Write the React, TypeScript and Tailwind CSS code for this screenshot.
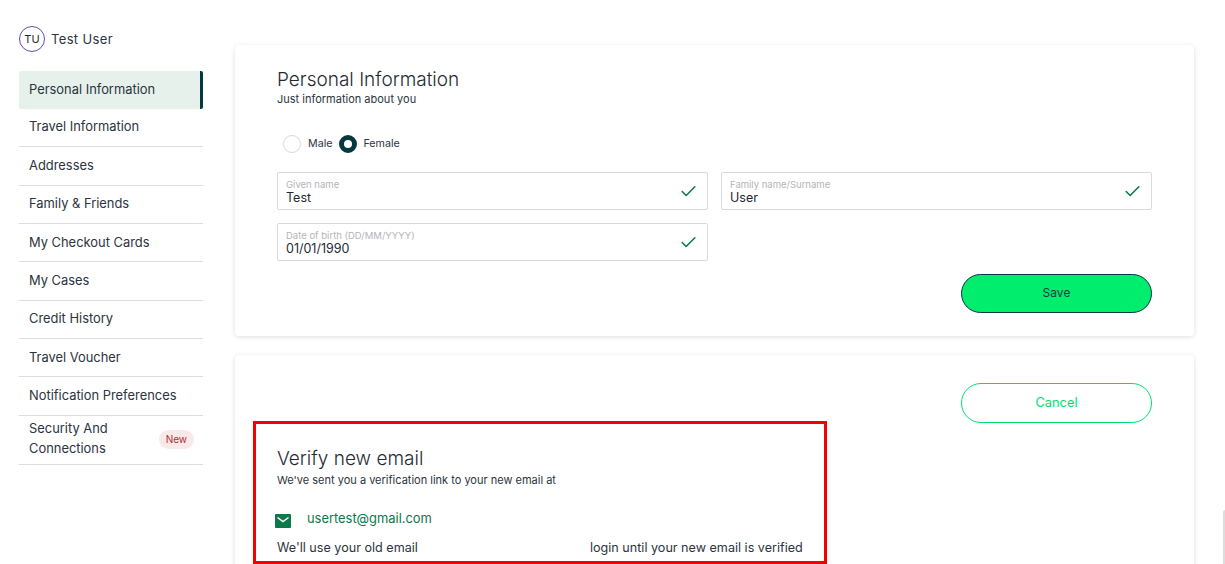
import { Check } from "lucide-react";

const navItems = [
  "Travel Information",
  "Addresses",
  "Family & Friends",
  "My Checkout Cards",
  "My Cases",
  "Credit History",
  "Travel Voucher",
  "Notification Preferences",
];

const Field = ({ label, value }: { label: string; value: string }) => (
  <div className="flex h-[38px] items-center justify-between rounded-[2px] border border-[#d8d8e0] pl-2 pr-[9px]">
    <div className="flex flex-col pt-[2px]">
      <span className="text-[9.5px] leading-[10px] text-[#b4b4b8]">{label}</span>
      <span className="text-[12.5px] leading-[15px] text-[#1f2a33]">{value}</span>
    </div>
    <Check className="h-[19px] w-[19px] text-[#0b7a4b]" strokeWidth={2} />
  </div>
);

export default function App() {
  return (
    <div
      className="relative flex h-[564px] w-[1225px] items-start overflow-hidden bg-white text-[#2c3440]"
      style={{ fontFamily: "Inter, sans-serif" }}
    >
      <aside className="ml-[19px] mt-[26px] w-[184px] shrink-0">
        <div className="flex items-center gap-[6px]">
          <div className="flex h-[26px] w-[26px] items-center justify-center rounded-full border border-[#5b4fb5] text-[11px] text-[#1f2a33]">
            TU
          </div>
          <span className="pt-[2px] text-[13px] tracking-[0.35px]">Test User</span>
        </div>

        <div className="mt-[19px] flex h-[38px] items-center rounded-[2px] border-r-[3px] border-[#06393f] bg-[#e6f1ec] pb-[1px] pl-[10px] text-[12.9px]">
          Personal Information
        </div>
        {navItems.map((item) => (
          <div
            key={item}
            className="flex h-[38.35px] items-center border-b border-[#dcdce4] pb-[1px] pl-[10px] text-[12.9px]"
          >
            {item}
          </div>
        ))}
        <div className="flex h-[49px] items-center justify-between border-b border-[#dcdce4] pb-[1px] pl-[10px] pr-[9px] text-[12.9px] leading-[20px]">
          <span>
            Security And
            <br />
            Connections
          </span>
          <span className="rounded-full bg-[#fbe9e9] px-[7px] py-[2px] text-[10px] leading-[15px] text-[#a8323a]">
            New
          </span>
        </div>
      </aside>

      <main className="ml-[32px] mt-[45px] w-[959px] shrink-0">
        <section className="h-[291px] rounded-[4px] bg-white pl-[42px] pr-[42px] pt-[23px] shadow-[0_1px_5px_rgba(0,0,0,0.13)]">
          <h2 className="text-[19px] font-light leading-[24px] text-[#1f2a33]">Personal Information</h2>
          <p className="mt-[1px] text-[11px] leading-[13px] text-[#2c3440]">Just information about you</p>

          <div className="ml-[6px] mt-[29px] flex items-center text-[10.7px]">
            <span className="h-[18px] w-[18px] rounded-full border border-[#d8d8e0]" />
            <span className="ml-[7px]">Male</span>
            <span className="ml-[7px] h-[18px] w-[18px] rounded-full border-[5px] border-[#06393f] bg-white" />
            <span className="ml-[6px]">Female</span>
          </div>

          <div className="mt-[19px] grid grid-cols-2 gap-x-[13px] gap-y-[13px]">
            <Field label="Given name" value="Test" />
            <Field label="Family name/Surname" value="User" />
            <Field label="Date of birth (DD/MM/YYYY)" value="01/01/1990" />
          </div>

          <div className="mt-[13px] flex justify-end">
            <button className="h-[39px] w-[191px] rounded-full border border-[#06393f] bg-[#00ed6e] pb-[1px] text-[12px] text-[#1f3a3f]">
              Save
            </button>
          </div>
        </section>

        <section className="mt-[19px] h-[300px] rounded-[4px] bg-white pt-[28px] shadow-[0_1px_5px_rgba(0,0,0,0.13)]">
          <div className="flex justify-end pr-[42px]">
            <button className="h-[40px] w-[191px] rounded-full border border-[#00e070] bg-white text-[12.8px] text-[#00e070]">
              Cancel
            </button>
          </div>

          <div className="ml-[18px] mt-[-2px] h-[143px] w-[574px] border-[3px] border-[#f40000] pl-[21px] pt-[23px]">
            <h2 className="text-[19px] font-light leading-[24px] text-[#1f2a33]">Verify new email</h2>
            <p className="mt-[3px] text-[11px] leading-[13px]">We've sent you a verification link to your new email at</p>
            <div className="mt-[24px] flex items-start">
              <svg width="16" height="14" viewBox="0 0 16 14" className="mt-[3px] ml-[-2px]">
                <rect width="16" height="14" rx="1" fill="#0b7a4b" />
                <path d="M2.5 3.5 8 7.5l5.5-4" fill="none" stroke="#fff" strokeWidth="1.5" />
              </svg>
              <span className="ml-[16px] text-[12.9px] leading-[15px] text-[#0b7a4b]">usertest@gmail.com</span>
            </div>
            <p className="mt-[12px] flex whitespace-nowrap text-[12.6px] leading-[15px]">
              <span className="w-[313px]">We'll use your old email</span>
              <span>login until your new email is verified</span>
            </p>
          </div>
        </section>
      </main>

      <div className="absolute bottom-0 right-0 h-[54px] w-[2px] rounded-tl-[2px] bg-[#dddddd]" />
    </div>
  );
}
